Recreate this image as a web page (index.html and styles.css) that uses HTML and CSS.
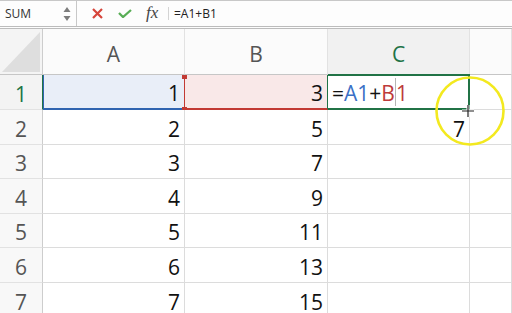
FILE: index.html
```html
<!DOCTYPE html>
<html lang="en">
<head>
    <meta charset="UTF-8">
    <title>Sheet</title>
    <link rel="stylesheet" href="styles.css">
</head>
<body>
    <div class="app">
        <div class="formula-bar">
            <div class="name-box">
                <span>SUM</span>
                <svg class="spin" width="8" height="16" viewBox="0 0 8 16">
                    <path d="M4 1 L7.5 6 L0.5 6 Z" fill="#7c7c7c"/>
                    <path d="M4 15 L7.5 10 L0.5 10 Z" fill="#7c7c7c"/>
                </svg>
            </div>
            <div class="tools">
                <svg class="cancel" width="11" height="11" viewBox="0 0 11 11">
                    <path d="M1 1 L10 10 M10 1 L1 10" stroke="#d6453b" stroke-width="2.2" fill="none"/>
                </svg>
                <svg class="enter" width="14" height="9" viewBox="0 0 14 9">
                    <path d="M1 4 L5 8 L13 1" stroke="#58ad55" stroke-width="2.3" fill="none"/>
                </svg>
                <span class="fx">fx</span>
            </div>
            <div class="formula">=A1+B1</div>
        </div>

        <div class="sheet">
            <div class="corner"></div>
            <div class="col-head">A</div>
            <div class="col-head">B</div>
            <div class="col-head active">C</div>
            <div class="col-head"></div>

            <div class="row-head active">1</div>
            <div class="cell ref-a">1</div>
            <div class="cell ref-b">3</div>
            <div class="cell editing">
                <span>=</span><span class="blue">A1</span><span>+</span><span class="red">B</span><span class="caret"></span><span class="red">1</span>
            </div>
            <div class="cell"></div>

            <div class="row-head">2</div>
            <div class="cell">2</div>
            <div class="cell">5</div>
            <div class="cell">7</div>
            <div class="cell"></div>

            <div class="row-head">3</div>
            <div class="cell">3</div>
            <div class="cell">7</div>
            <div class="cell"></div>
            <div class="cell"></div>

            <div class="row-head">4</div>
            <div class="cell">4</div>
            <div class="cell">9</div>
            <div class="cell"></div>
            <div class="cell"></div>

            <div class="row-head">5</div>
            <div class="cell">5</div>
            <div class="cell">11</div>
            <div class="cell"></div>
            <div class="cell"></div>

            <div class="row-head">6</div>
            <div class="cell">6</div>
            <div class="cell">13</div>
            <div class="cell"></div>
            <div class="cell"></div>

            <div class="row-head">7</div>
            <div class="cell">7</div>
            <div class="cell">15</div>
            <div class="cell"></div>
            <div class="cell"></div>
        </div>

        <svg class="highlight" width="72" height="72" viewBox="0 0 72 72">
            <circle cx="36" cy="36" r="33.5" stroke="#f3e91f" stroke-width="2.6" fill="none"/>
        </svg>
        <svg class="crosshair" width="14" height="14" viewBox="0 0 14 14">
            <path d="M7 1 V13 M1 7 H13" stroke="#fff" stroke-width="3"/>
            <path d="M7 1 V13 M1 7 H13" stroke="#222" stroke-width="1.2"/>
        </svg>
    </div>
</body>
</html>
```

FILE: styles.css
```css
body {
    margin: 0;
    padding: 0;
    background: #fff;
    font-family: "Open Sans", "Noto Sans", sans-serif;
    overflow: hidden;
}

.app {
    position: relative;
    width: 512px;
    height: 313px;
    overflow: hidden;
}

/* formula bar */
.formula-bar {
    display: flex;
    height: 25px;
    background: #fdfdfd;
    border-top: 1px solid #c8c8c8;
    border-bottom: 3px double #bcbcbc;
}

.name-box {
    width: 77px;
    display: flex;
    align-items: center;
    justify-content: space-between;
    padding: 0 5px;
    box-sizing: border-box;
    border-right: 1px solid #c8c8c8;
    font-size: 12px;
    color: #333;
}

.tools {
    display: flex;
    align-items: center;
    padding-left: 15px;
    width: 92px;
    box-sizing: border-box;
    border-right: 1px solid #d4d4d4;
    margin: 6px 0;
}

.cancel {
    margin-right: 15px;
}

.enter {
    margin-right: 14px;
}

.fx {
    font-family: "Liberation Serif", serif;
    font-style: italic;
    font-size: 17px;
    color: #444;
    line-height: 12px;
    margin-top: -2px;
}

.formula {
    display: flex;
    align-items: center;
    padding-left: 5px;
    font-size: 12px;
    color: #222;
}

/* grid */
.sheet {
    display: grid;
    grid-template-columns: 43px 142px 143px 142px 1fr;
    grid-template-rows: 46px 35px 35px 34px 35px 34px 35px 35px;
}

.corner {
    background: #f4f4f4;
    border-right: 1px solid #cdcdcd;
    border-bottom: 1px solid #c6c6c6;
    position: relative;
}

.corner::after {
    content: "";
    position: absolute;
    right: 2px;
    bottom: 2px;
    width: 38px;
    height: 40px;
    background: #dedede;
    clip-path: polygon(100% 0, 100% 100%, 0 100%);
}

.col-head {
    display: flex;
    align-items: flex-end;
    justify-content: center;
    padding-bottom: 8px;
    box-sizing: border-box;
    background: #fbfbfb;
    border-right: 1px solid #e2e2e2;
    border-bottom: 1px solid #c6c6c6;
    font-size: 21px;
    line-height: 24px;
    color: #555;
}

.col-head.active {
    background: #f1f1f1;
    color: #217346;
}

.row-head {
    display: flex;
    align-items: flex-end;
    justify-content: center;
    padding-bottom: 3px;
    box-sizing: border-box;
    background: #f8f8f8;
    border-right: 1px solid #cdcdcd;
    border-bottom: 1px solid #e2e2e2;
    font-size: 21px;
    line-height: 24px;
    color: #555;
}

.row-head.active {
    color: #217346;
    background: #f3f3f3;
    border-right-color: #217346;
}

.cell {
    display: flex;
    align-items: flex-end;
    justify-content: flex-end;
    padding: 0 4px 3px 4px;
    box-sizing: border-box;
    background: #fff;
    border-right: 1px solid #dcdcdc;
    border-bottom: 1px solid #dcdcdc;
    font-size: 21px;
    line-height: 24px;
    color: #111;
    position: relative;
}

.cell.ref-a {
    background: #e9eef8;
    border-bottom: 2px solid #3064b0;
    border-right-color: #c23a34;
    box-shadow: inset 1px 0 #3064b0;
}

.cell.ref-b {
    background: #f9e8e8;
    border-bottom: 2px solid #c23a34;
    border-right-color: #217346;
}

.cell.ref-b::before,
.cell.ref-b::after {
    content: "";
    position: absolute;
    left: -3px;
    width: 5px;
    height: 4px;
    background: #c23a34;
}

.cell.ref-b::before {
    top: 0;
}

.cell.ref-b::after {
    bottom: -3px;
}

.cell.editing {
    justify-content: flex-start;
    padding-left: 4px;
    border: 2px solid #217346;
    border-left: 0;
    margin-top: -1px;
}

.blue {
    color: #3a70c6;
}

.red {
    color: #bd3b3b;
}

.caret {
    width: 1px;
    height: 28px;
    background: #b5b5b5;
    align-self: flex-end;
    margin-bottom: -1px;
}

/* overlays */
.highlight {
    position: absolute;
    left: 434px;
    top: 75px;
}

.crosshair {
    position: absolute;
    left: 461px;
    top: 104px;
}
```
